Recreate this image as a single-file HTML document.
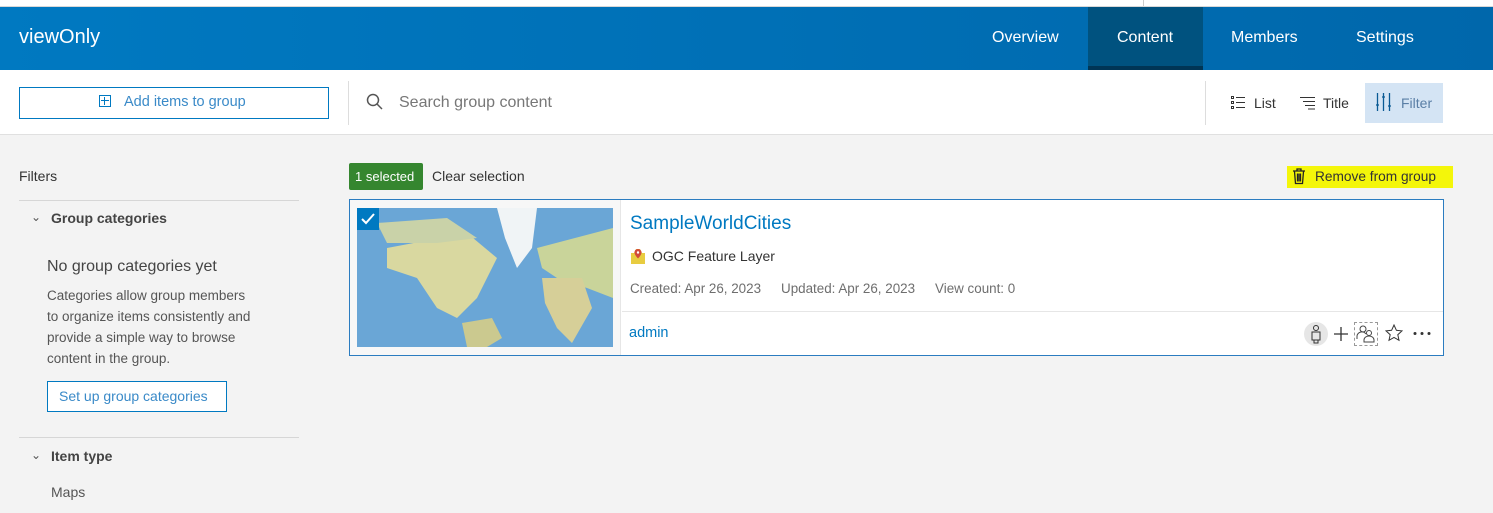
<!DOCTYPE html>
<html><head><meta charset="utf-8"><style>
*{box-sizing:border-box;margin:0;padding:0}
body{width:1493px;height:513px;overflow:hidden;background:#f3f3f3;font-family:"Liberation Sans",sans-serif;position:relative;color:#323232}
.a{position:absolute}
</style></head><body>
<div class="a" style="left:0;top:0;width:1493px;height:7px;background:#fff;border-bottom:1px solid #d8d8d8"></div>
<div class="a" style="left:1143px;top:0;width:1px;height:6px;background:#ccc"></div>
<div class="a" style="left:0;top:7px;width:1493px;height:63px;background:linear-gradient(90deg,#0079c1,#0067ab)"></div>
<div class="a" style="left:19px;top:26px;font-size:20px;color:#fff">viewOnly</div>
<div class="a" style="left:992px;top:29px;font-size:16px;color:#fff">Overview</div>
<div class="a" style="left:1088px;top:7px;width:115px;height:63px;background:#00527f;border-bottom:4px solid #003555"></div>
<div class="a" style="left:1117px;top:29px;font-size:16px;color:#fff">Content</div>
<div class="a" style="left:1231px;top:29px;font-size:16px;color:#fff">Members</div>
<div class="a" style="left:1356px;top:29px;font-size:16px;color:#fff">Settings</div>
<div class="a" style="left:0;top:70px;width:1493px;height:65px;background:#fff;border-bottom:1px solid #e0e0e0"></div>
<div class="a" style="left:19px;top:87px;width:310px;height:32px;border:1px solid #0079c1;background:#fff"></div>
<div class="a" style="left:99px;top:95px;width:12px;height:12px;border:1px solid #0079c1"></div>
<div class="a" style="left:104px;top:97px;width:1px;height:8px;background:#0079c1"></div>
<div class="a" style="left:101px;top:100px;width:8px;height:1px;background:#0079c1"></div>
<div class="a" style="left:124px;top:94px;font-size:14.5px;color:#3a8ac8">Add items to group</div>
<div class="a" style="left:348px;top:81px;width:1px;height:44px;background:#ddd"></div>
<svg class="a" style="left:366px;top:93px" width="18" height="18"><circle cx="7" cy="7" r="5.5" fill="none" stroke="#555" stroke-width="1.5"/><line x1="11" y1="11" x2="16" y2="16" stroke="#555" stroke-width="1.5"/></svg>
<div class="a" style="left:399px;top:94px;font-size:16px;color:#777">Search group content</div>
<div class="a" style="left:1205px;top:81px;width:1px;height:44px;background:#ddd"></div>
<svg class="a" style="left:1231px;top:96px" width="16" height="14"><g fill="none" stroke="#333"><rect x="0.5" y="0.5" width="2" height="2"/><rect x="0.5" y="5.5" width="2" height="2"/><rect x="0.5" y="10.5" width="2" height="2"/><path d="M5 1.5h9M5 6.5h9M5 11.5h9"/></g></svg>
<div class="a" style="left:1254px;top:95px;font-size:14px;color:#333">List</div>
<svg class="a" style="left:1300px;top:96px" width="16" height="14"><path d="M0 1.5h15M3 5.5h12M5 9.5h10M8 13h7" stroke="#333" fill="none"/></svg>
<div class="a" style="left:1323px;top:95px;font-size:14px;color:#333">Title</div>
<div class="a" style="left:1365px;top:83px;width:78px;height:40px;background:#d4e4f4"></div>
<svg class="a" style="left:1376px;top:93px" width="16" height="18"><path d="M1.5 0v18M7.5 0v18M13.5 0v18M0 12h3M6 4h3M12 13h3" stroke="#0a5a94" stroke-width="1.3" fill="none"/></svg>
<div class="a" style="left:1401px;top:95px;font-size:14px;color:#5a7fa6">Filter</div>
<div class="a" style="left:19px;top:168px;font-size:14px">Filters</div>
<div class="a" style="left:19px;top:200px;width:280px;height:1px;background:#d6d6d6"></div>
<div class="a" style="left:31px;top:210px;font-size:12px;color:#555">&#8964;</div>
<div class="a" style="left:51px;top:210px;font-size:14px;font-weight:bold;color:#444">Group categories</div>
<div class="a" style="left:47px;top:258px;font-size:16px;color:#444">No group categories yet</div>
<div class="a" style="left:47px;top:285px;font-size:13.5px;line-height:21px;color:#555;white-space:nowrap">Categories allow group members<br>to organize items consistently and<br>provide a simple way to browse<br>content in the group.</div>
<div class="a" style="left:47px;top:381px;width:180px;height:31px;border:1px solid #0079c1;background:#fff"></div>
<div class="a" style="left:59px;top:388px;font-size:14px;color:#3a8ac8">Set up group categories</div>
<div class="a" style="left:19px;top:437px;width:280px;height:1px;background:#d6d6d6"></div>
<div class="a" style="left:31px;top:448px;font-size:12px;color:#555">&#8964;</div>
<div class="a" style="left:51px;top:448px;font-size:14px;font-weight:bold;color:#444">Item type</div>
<div class="a" style="left:51px;top:484px;font-size:14px;color:#555">Maps</div>
<div class="a" style="left:349px;top:163px;width:74px;height:27px;background:#35862f;border-radius:2px"></div>
<div class="a" style="left:355px;top:169px;font-size:13px;color:#fff">1 selected</div>
<div class="a" style="left:432px;top:168px;font-size:14px;color:#333">Clear selection</div>
<div class="a" style="left:1287px;top:166px;width:166px;height:22px;background:#f4f60a"></div>
<svg class="a" style="left:1292px;top:168px" width="14" height="17"><path d="M1 3h12M5 3V1h4v2M2.5 3.5l1 12h7l1-12M5.5 5.5v8M7 5.5v8M8.5 5.5v8" stroke="#222" fill="none" stroke-width="1.3"/></svg>
<div class="a" style="left:1315px;top:169px;font-size:13.7px;color:#333">Remove from group</div>
<div class="a" style="left:349px;top:199px;width:1095px;height:157px;border:1px solid #2b7cc0;background:#fff"></div>
<div class="a" style="left:350px;top:200px;width:271px;height:155px;background:#f7f7f7;border-right:1px solid #e6e6e6"></div>
<svg class="a" style="left:357px;top:208px" width="256" height="139"><rect width="256" height="139" fill="#6aa6d6"/><path d="M30 40 L110 25 140 50 120 90 100 110 80 100 60 70 30 60Z" fill="#d9d8a0"/><path d="M105 115 L135 110 145 130 130 139 110 139Z" fill="#cbc98f"/><path d="M140 0 L180 0 175 40 160 60 148 30Z" fill="#f0f4f6"/><path d="M180 40 L256 20 256 90 230 80 200 70 185 60Z" fill="#c9d49a"/><path d="M185 70 L225 70 235 100 215 135 200 120 188 95Z" fill="#d6cf98"/><path d="M20 15 L90 10 120 30 80 35 30 35Z" fill="#c9d2a8"/></svg>
<div class="a" style="left:357px;top:208px;width:22px;height:22px;background:#0079c1"></div>
<svg class="a" style="left:360px;top:211px" width="16" height="16"><path d="M2 8l4 4 8-9" stroke="#fff" stroke-width="2" fill="none"/></svg>
<div class="a" style="left:630px;top:213px;font-size:19px;color:#0079c1">SampleWorldCities</div>
<svg class="a" style="left:630px;top:247px" width="16" height="18"><path d="M1 6h3l2 -4h4l2 4h3v11H1Z" fill="#e8cc40"/><path d="M8 2c-2.5 0-3.5 2-3.5 3.5 0 2.5 3.5 6 3.5 6s3.5-3.5 3.5-6C11.5 4 10.5 2 8 2z" fill="#d24a3a"/><circle cx="8" cy="5.5" r="1.2" fill="#fff"/></svg>
<div class="a" style="left:652px;top:248px;font-size:14px;color:#333">OGC Feature Layer</div>
<div class="a" style="left:630px;top:281px;font-size:13.4px;color:#6e6e6e">Created: Apr 26, 2023<span style="margin-left:20px">Updated: Apr 26, 2023</span><span style="margin-left:20px">View count: 0</span></div>
<div class="a" style="left:622px;top:311px;width:821px;height:1px;background:#e6e6e6"></div>
<div class="a" style="left:629px;top:325px;font-size:14.5px;color:#0079c1">admin</div>
<div class="a" style="left:1304px;top:322px;width:24px;height:24px;border-radius:12px;background:#e6e6e6"></div>
<svg class="a" style="left:1309px;top:324px" width="14" height="20"><circle cx="7" cy="4" r="2.5" fill="none" stroke="#333"/><path d="M3 8h8v8H3ZM5 16v3h4v-3" fill="none" stroke="#333"/></svg>
<svg class="a" style="left:1334px;top:327px" width="14" height="14"><path d="M7 0v14M0 7h14" stroke="#333" stroke-width="1.3"/></svg>
<div class="a" style="left:1354px;top:322px;width:24px;height:24px;border:1px dashed #999"></div>
<svg class="a" style="left:1356px;top:324px" width="20" height="20"><circle cx="7" cy="5" r="3" fill="none" stroke="#444"/><path d="M1 15v-3a5 5 0 0 1 9-2" fill="none" stroke="#444"/><circle cx="13" cy="9" r="2.5" fill="none" stroke="#444"/><path d="M8 18v-2a5 4 0 0 1 10 0v2Z" fill="none" stroke="#444"/></svg>
<svg class="a" style="left:1385px;top:324px" width="18" height="18"><path d="M9 1l2.4 5.3 5.6.6-4.2 3.8 1.2 5.6L9 13.4 4 16.3l1.2-5.6L1 6.9l5.6-.6Z" fill="none" stroke="#333"/></svg>
<svg class="a" style="left:1413px;top:331px" width="18" height="5"><circle cx="2" cy="2.5" r="1.5" fill="#333"/><circle cx="9" cy="2.5" r="1.5" fill="#333"/><circle cx="16" cy="2.5" r="1.5" fill="#333"/></svg>
</body></html>
